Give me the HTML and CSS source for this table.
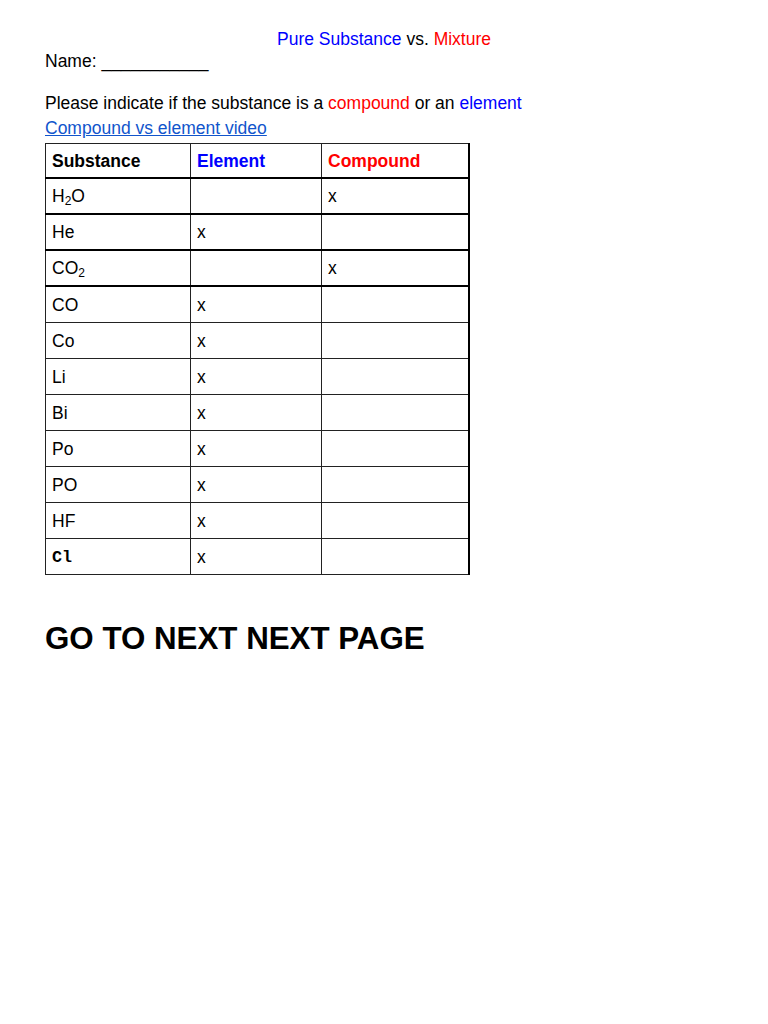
FILE: index.html
```html
<!DOCTYPE html>
<html>
<head>
<meta charset="utf-8">
<link rel="stylesheet" href="styles.css">
</head>
<body>
<div class="page">
  <p class="title"><span class="blue">Pure Substance</span> vs. <span class="red">Mixture</span></p>
  <p class="name">Name: ___________</p>
  <p class="instr">Please indicate if the substance is a <span class="red">compound</span> or an <span class="blue">element</span></p>
  <p class="link"><a href="#">Compound vs element video</a></p>
  <table class="grid">
    <tr class="thick head">
      <th class="c1">Substance</th><th class="c2 blue">Element</th><th class="c3 red">Compound</th>
    </tr>
    <tr class="thick"><td>H<sub>2</sub>O</td><td></td><td>x</td></tr>
    <tr class="thick"><td>He</td><td>x</td><td></td></tr>
    <tr class="thick"><td>CO<sub>2</sub></td><td></td><td>x</td></tr>
    <tr><td>CO</td><td>x</td><td></td></tr>
    <tr><td>Co</td><td>x</td><td></td></tr>
    <tr><td>Li</td><td>x</td><td></td></tr>
    <tr><td>Bi</td><td>x</td><td></td></tr>
    <tr><td>Po</td><td>x</td><td></td></tr>
    <tr><td>PO</td><td>x</td><td></td></tr>
    <tr><td>HF</td><td>x</td><td></td></tr>
    <tr><td><span class="mono">Cl</span></td><td>x</td><td></td></tr>
  </table>
  <h1 class="next">GO TO NEXT NEXT PAGE</h1>
</div>
</body>
</html>
```

FILE: styles.css
```css
html, body {
  margin: 0;
  padding: 0;
  background: #fff;
}
body {
  font-family: "Liberation Sans", Arial, sans-serif;
  font-size: 17.5px;
  color: #000;
}
.page {
  padding: 28px 45px 0 45px;
  width: 678px;
}
p { margin: 0; }
.blue { color: #0000ff; }
.red { color: #ff0000; }
.title {
  text-align: center;
  line-height: 22px;
}
.name {
  line-height: 22px;
}
.instr {
  margin-top: 18px;
  line-height: 26px;
}
.link {
  line-height: 25px;
}
.link a {
  color: #1155cc;
  text-decoration: underline;
}
.grid {
  margin-top: 2px;
  border-collapse: collapse;
  border-right: 2px solid #000;
}
.grid th, .grid td {
  border: 1px solid #222;
  height: 35px;
  padding: 0 6px;
  text-align: left;
  vertical-align: middle;
  font-size: 17.5px;
  line-height: 18px;
}
.grid th { font-weight: bold; }
.grid tr.thick td, .grid tr.thick th {
  border-bottom: 2px solid #000;
  height: 34px;
}
.grid tr.head th {
  height: 33px;
}
.c1 { width: 132px; }
.c2 { width: 118px; }
.c3 { width: 134px; }
sub {
  font-size: 12px;
  vertical-align: -3px;
  line-height: 0;
}
.mono {
  font-family: "Liberation Mono", "Courier New", monospace;
  font-weight: bold;
  font-size: 16.7px;
}
.next {
  margin: 46px 0 0 0;
  font-size: 31.3px;
  font-weight: bold;
  line-height: 36px;
}
```
